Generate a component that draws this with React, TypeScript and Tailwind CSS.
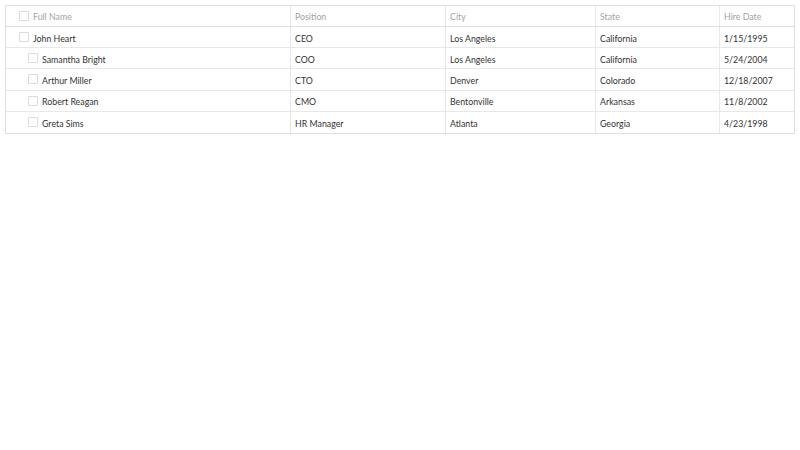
const rows = [
  { name: "John Heart", position: "CEO", city: "Los Angeles", state: "California", date: "1/15/1995", level: 0 },
  { name: "Samantha Bright", position: "COO", city: "Los Angeles", state: "California", date: "5/24/2004", level: 1 },
  { name: "Arthur Miller", position: "CTO", city: "Denver", state: "Colorado", date: "12/18/2007", level: 1 },
  { name: "Robert Reagan", position: "CMO", city: "Bentonville", state: "Arkansas", date: "11/8/2002", level: 1 },
  { name: "Greta Sims", position: "HR Manager", city: "Atlanta", state: "Georgia", date: "4/23/1998", level: 1 },
];

function Checkbox() {
  return <span className="inline-block w-[10px] h-[10px] border border-[#dcdcdc] bg-white rounded-[1px] shrink-0" />;
}

const cols = "grid grid-cols-[284px_155px_150px_124px_1fr]";
const cell = "flex items-center pl-[4px] pt-[2px] border-l border-[#e8e8e8]";

export default function App() {
  return (
    <div className="w-[800px] h-[450px] bg-white p-[5px] font-['Lato',sans-serif] text-[8.8px]">
      <div className="border border-[#e0e0e0]">
        <div className={`${cols} h-[21px] border-b border-[#e0e0e0] text-[#a3a3a3]`}>
          <div className="flex items-center gap-[4px] pl-[13px]">
            <Checkbox />
            <span className="mt-[2px]">Full Name</span>
          </div>
          <div className={cell}>Position</div>
          <div className={cell}>City</div>
          <div className={cell}>State</div>
          <div className={cell}>Hire Date</div>
        </div>
        {rows.map((r, i) => (
          <div
            key={r.name}
            className={`${cols} h-[21.2px] text-[#333] ${i < rows.length - 1 ? "border-b border-[#e8e8e8]" : ""}`}
          >
            <div className={`flex items-center gap-[4px] ${r.level ? "pl-[22px]" : "pl-[13px]"}`}>
              <Checkbox />
              <span className="mt-[2px]">{r.name}</span>
            </div>
            <div className={cell}>{r.position}</div>
            <div className={cell}>{r.city}</div>
            <div className={cell}>{r.state}</div>
            <div className={cell}>{r.date}</div>
          </div>
        ))}
      </div>
    </div>
  );
}
